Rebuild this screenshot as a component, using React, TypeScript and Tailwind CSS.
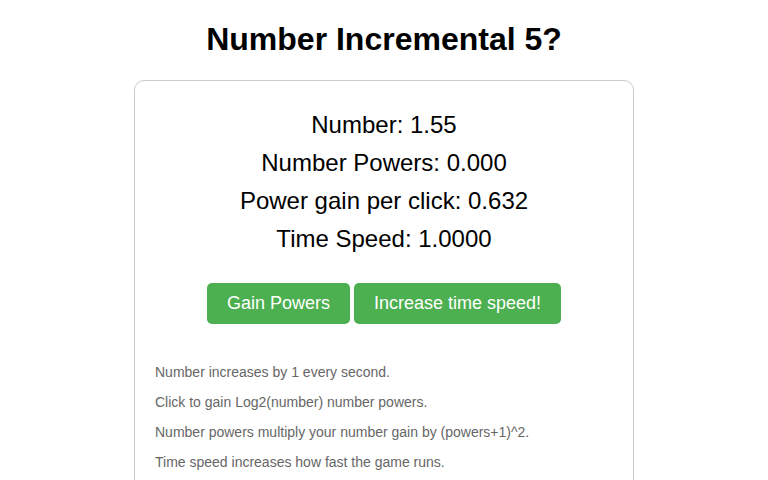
import React from 'react';

const stats = [
  { label: 'Number', value: '1.55' },
  { label: 'Number Powers', value: '0.000' },
  { label: 'Power gain per click', value: '0.632' },
  { label: 'Time Speed', value: '1.0000' },
];

const notes = [
  'Number increases by 1 every second.',
  'Click to gain Log2(number) number powers.',
  'Number powers multiply your number gain by (powers+1)^2.',
  'Time speed increases how fast the game runs.',
];

const App = () => {
  return (
    <div className="min-h-screen bg-white font-['Liberation_Sans',Arial,sans-serif] text-black">
      <h1 className="pt-[21px] text-center text-[32px] font-bold leading-[37px]">
        Number Incremental 5?
      </h1>

      <div className="mx-auto mt-[22px] w-[500px] rounded-[10px] border border-[#cccccc] px-5 py-5">
        <div className="text-center">
          {stats.map((s) => (
            <p key={s.label} className="my-[10px] text-[24px] leading-[28px]">
              {s.label}: {s.value}
            </p>
          ))}
        </div>

        <div className="mt-[30px] flex justify-center gap-[4px]">
          <button className="rounded-[5px] bg-[#4caf50] px-5 py-[10px] text-[18px] leading-[21px] text-white">
            Gain Powers
          </button>
          <button className="rounded-[5px] bg-[#4caf50] px-5 py-[10px] text-[18px] leading-[21px] text-white">
            Increase time speed!
          </button>
        </div>

        <div className="mt-[40px] flex flex-col gap-[14px] text-[14px] leading-[16px] text-[#666666]">
          {notes.map((n) => (
            <p key={n}>{n}</p>
          ))}
        </div>
      </div>
    </div>
  );
};

export default App;
